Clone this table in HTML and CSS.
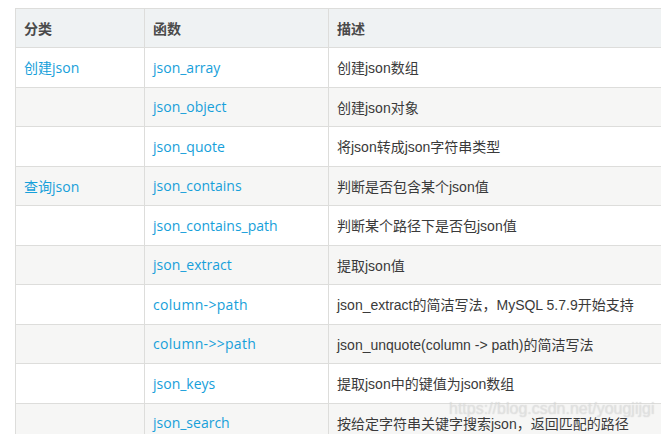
FILE: index.html
```html
<!DOCTYPE html>
<html lang="zh">
<head>
<meta charset="utf-8">
<link rel="stylesheet" href="styles.css">
</head>
<body>
<div class="wrap">
<table class="tbl">
<thead>
<tr><th class="c1">分类</th><th class="c2">函数</th><th class="c3">描述</th></tr>
</thead>
<tbody>
<tr><td class="link">创建json</td><td class="link">json_array</td><td class="desc">创建json数组</td></tr>
<tr><td></td><td class="link">json_object</td><td class="desc">创建json对象</td></tr>
<tr><td></td><td class="link">json_quote</td><td class="desc">将json转成json字符串类型</td></tr>
<tr><td class="link">查询json</td><td class="link">json_contains</td><td class="desc">判断是否包含某个json值</td></tr>
<tr><td></td><td class="link">json_contains_path</td><td class="desc">判断某个路径下是否包json值</td></tr>
<tr><td></td><td class="link">json_extract</td><td class="desc">提取json值</td></tr>
<tr><td></td><td class="link arrow">column-&gt;path</td><td class="desc">json_extract的简洁写法，MySQL 5.7.9开始支持</td></tr>
<tr><td></td><td class="link arrow">column-&gt;&gt;path</td><td class="desc">json_unquote(column -&gt; path)的简洁写法</td></tr>
<tr><td></td><td class="link">json_keys</td><td class="desc">提取json中的键值为json数组</td></tr>
<tr><td></td><td class="link">json_search</td><td class="desc">按给定字符串关键字搜索json，返回匹配的路径</td></tr>
</tbody>
</table>
<div class="watermark">https://blog.csdn.net/yougjijgi</div>
</div>
</body>
</html>
```

FILE: styles.css
```css
html, body {
  margin: 0;
  padding: 0;
  background: #ffffff;
  overflow: hidden;
}
.wrap {
  position: relative;
  width: 661px;
  height: 434px;
  overflow: hidden;
  padding: 8px 0 0 15px;
  box-sizing: border-box;
}
.tbl {
  border-collapse: collapse;
  table-layout: fixed;
  width: 720px;
  font-family: "Liberation Sans", "Noto Sans CJK SC", sans-serif;
  font-size: 14px;
  color: #333333;
}
.tbl th, .tbl td {
  border: 1px solid #dddddb;
  padding: 0 8px;
  height: 38.5px;
  text-align: left;
  vertical-align: middle;
  white-space: nowrap;
}
.tbl th {
  background: #eff2f3;
  font-family: "Noto Sans CJK SC", sans-serif;
  font-weight: bold;
  color: #4a4a4a;
  height: 38px;
}
.c1 { width: 112px; }
.c2 { width: 167px; }
.tbl tbody tr:nth-child(even) td {
  background: #f6f6f5;
}
.link {
  font-family: "Open Sans", "Noto Sans CJK SC", sans-serif;
  color: #16a0da;
}
.arrow {
  letter-spacing: 0.3px;
}
.desc {
  color: #3a3a3a;
}
.watermark {
  position: absolute;
  left: 449px;
  top: 400px;
  font-family: "Liberation Sans", sans-serif;
  font-size: 16px;
  color: rgba(240, 240, 240, 0.5);
  text-shadow: 0 0 1px rgba(150, 150, 150, 0.45);
  pointer-events: none;
}
```
